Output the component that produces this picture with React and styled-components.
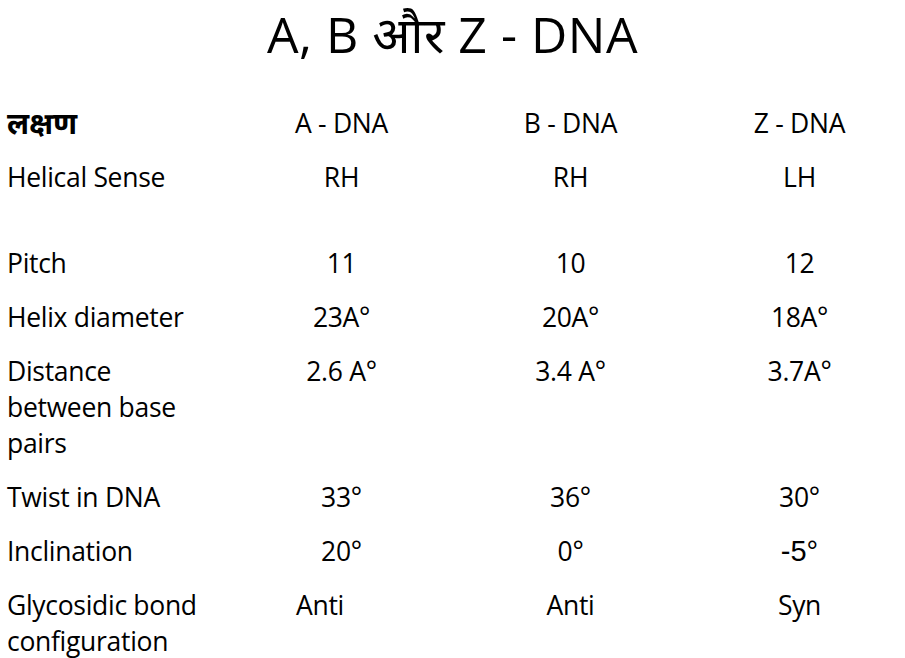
import React from "react"
import styled, { createGlobalStyle } from "styled-components"

const GlobalStyle = createGlobalStyle`
  html, body {
    margin: 0;
    padding: 0;
    background: #ffffff;
  }
  body {
    font-family: "Open Sans", "Noto Sans Devanagari", "Lohit Devanagari", "Mangal", "Noto Sans", sans-serif;
    color: #000000;
  }
`

const Slide = styled.div`
  width: 905px;
  height: 658px;
  overflow: hidden;
  background: #ffffff;
`

const Title = styled.h1`
  margin: 0;
  text-align: center;
  font-size: 50px;
  font-weight: 400;
  line-height: normal;
  letter-spacing: 0.5px;
`

const Table = styled.div`
  display: grid;
  row-gap: 18px;
  margin-top: 32px;
`

const Row = styled.div`
  display: grid;
  grid-template-columns: 227px repeat(3, 229px);
  align-items: start;
  padding-bottom: ${(p) => (p.$spacer ? "32px" : "0")};
`

const Cell = styled.div`
  font-size: 26.5px;
  line-height: 36px;
  letter-spacing: -0.3px;
  white-space: nowrap;
  text-align: ${(p) => p.$align || "center"};
  padding-left: ${(p) => p.$indent || 0}px;
`

const Label = styled(Cell)`
  text-align: left;
  padding-left: 7px;
`

const HeadLabel = styled(Label)`
  font-size: 30px;
  font-weight: 700;
  letter-spacing: 0;
`

const ArialValue = styled.span`
  font-family: "Liberation Sans", Arial, sans-serif;
  font-size: 29px;
  letter-spacing: 0;
`

const rows = [
  { label: "Helical Sense", values: ["RH", "RH", "LH"], spacer: true },
  { label: "Pitch", values: ["11", "10", "12"] },
  { label: "Helix diameter", values: ["23A°", "20A°", "18A°"] },
  {
    label: (
      <>
        Distance
        <br />
        between base
        <br />
        pairs
      </>
    ),
    values: ["2.6 A°", "3.4 A°", "3.7A°"],
  },
  { label: "Twist in DNA", values: ["33°", "36°", "30°"] },
  {
    label: "Inclination",
    values: ["20°", "0°", <ArialValue key="z">-5°</ArialValue>],
  },
]

export default function App() {
  return (
    <Slide>
      <GlobalStyle />
      <Title>A, B और Z - DNA</Title>
      <Table>
        <Row>
          <HeadLabel>लक्षण</HeadLabel>
          <Cell>A - DNA</Cell>
          <Cell>B - DNA</Cell>
          <Cell>Z - DNA</Cell>
        </Row>
        {rows.map((row, i) => (
          <Row key={i} $spacer={row.spacer}>
            <Label>{row.label}</Label>
            {row.values.map((v, j) => (
              <Cell key={j}>{v}</Cell>
            ))}
          </Row>
        ))}
        <Row>
          <Label>
            Glycosidic bond
            <br />
            configuration
          </Label>
          <Cell $align="left" $indent={69}>
            Anti
          </Cell>
          <Cell>Anti</Cell>
          <Cell>Syn</Cell>
        </Row>
      </Table>
    </Slide>
  )
}
